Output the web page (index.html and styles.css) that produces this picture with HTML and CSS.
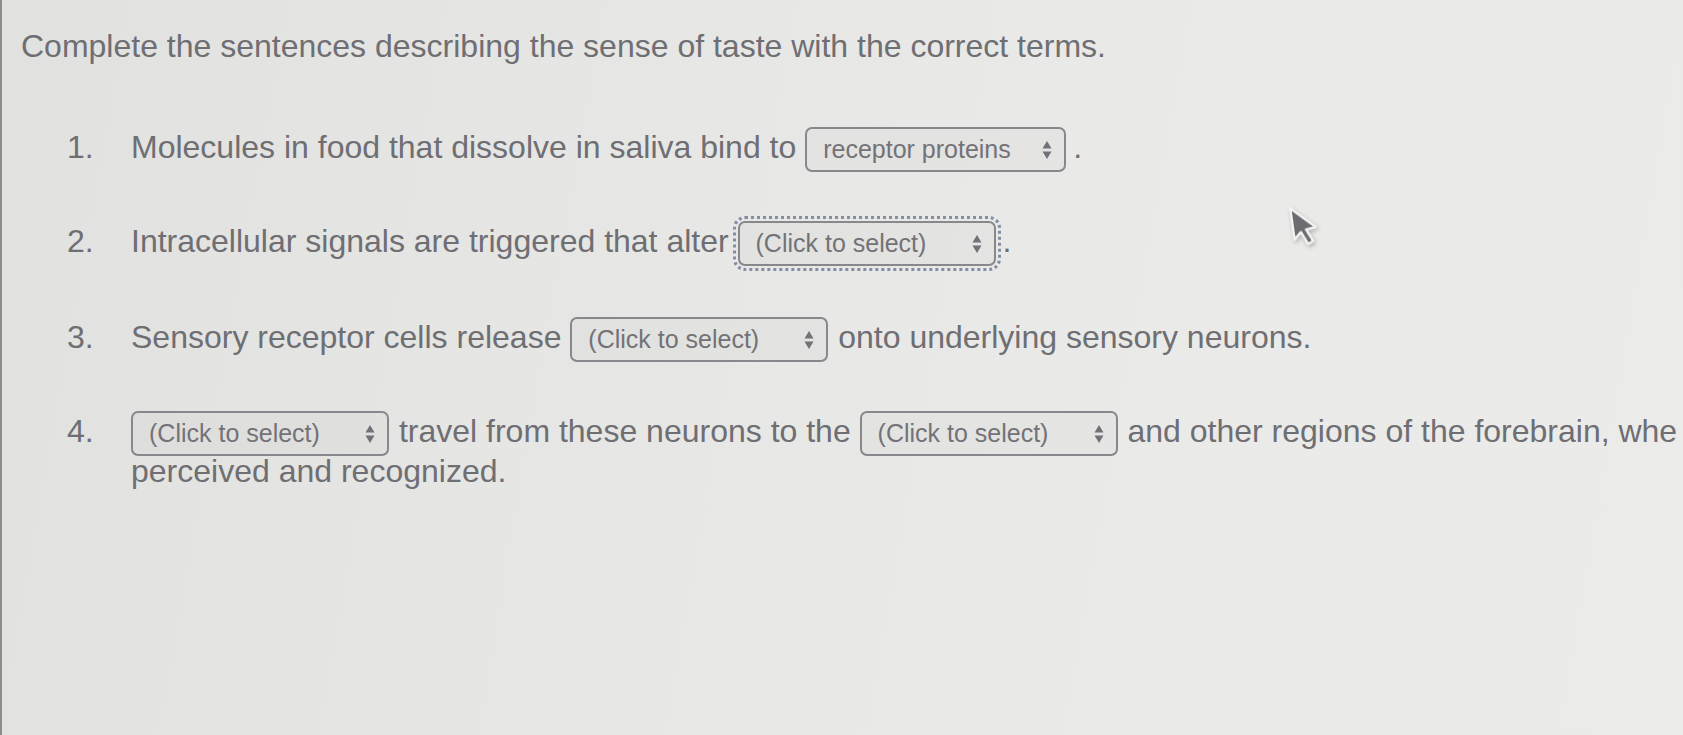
FILE: index.html
```html
<!DOCTYPE html>
<html lang="en">
<head>
<meta charset="utf-8">
<title>Sense of taste</title>
<link rel="stylesheet" href="styles.css">
</head>
<body>
<main class="page">
  <p class="prompt">Complete the sentences describing the sense of taste with the correct terms.</p>
  <ol class="items">
    <li class="item">
      <span class="num">1.</span>
      <span class="text">Molecules in food that dissolve in saliva bind to <span class="select"><span class="select-label">receptor proteins</span><svg class="select-arrows" viewBox="0 0 10 20"><path d="M0.5 8.5 L5 1 L9.5 8.5 Z M0.5 11.5 L5 19 L9.5 11.5 Z"/></svg></span><span class="end">.</span></span>
    </li>
    <li class="item">
      <span class="num">2.</span>
      <span class="text">Intracellular signals are triggered that alter <span class="select select-focus"><span class="select-label">(Click to select)</span><svg class="select-arrows" viewBox="0 0 10 20"><path d="M0.5 8.5 L5 1 L9.5 8.5 Z M0.5 11.5 L5 19 L9.5 11.5 Z"/></svg></span><span class="end">.</span></span>
    </li>
    <li class="item">
      <span class="num">3.</span>
      <span class="text">Sensory receptor cells release <span class="select"><span class="select-label">(Click to select)</span><svg class="select-arrows" viewBox="0 0 10 20"><path d="M0.5 8.5 L5 1 L9.5 8.5 Z M0.5 11.5 L5 19 L9.5 11.5 Z"/></svg></span> onto underlying sensory neurons.</span>
    </li>
    <li class="item">
      <span class="num">4.</span>
      <span class="text"><span class="nowrap"><span class="select"><span class="select-label">(Click to select)</span><svg class="select-arrows" viewBox="0 0 10 20"><path d="M0.5 8.5 L5 1 L9.5 8.5 Z M0.5 11.5 L5 19 L9.5 11.5 Z"/></svg></span> travel from these neurons to the <span class="select"><span class="select-label">(Click to select)</span><svg class="select-arrows" viewBox="0 0 10 20"><path d="M0.5 8.5 L5 1 L9.5 8.5 Z M0.5 11.5 L5 19 L9.5 11.5 Z"/></svg></span> and other regions of the forebrain, whe</span><br>perceived and recognized.</span>
    </li>
  </ol>
  <svg class="cursor" viewBox="0 0 24 36" width="24" height="36" aria-hidden="true">
    <path d="M2 2 L2 28 L8 22.5 L12.5 33 L17 31 L12.5 21 L20.5 20 Z"/>
  </svg>
</main>
</body>
</html>
```

FILE: styles.css
```css
html, body {
  margin: 0;
  height: 100%;
}

body {
  overflow: hidden;
  background: linear-gradient(100deg, #e1e1df 0%, #e6e6e4 35%, #eaeae8 70%, #ebebea 100%);
  border-left: 2px solid #8d8d8d;
  box-sizing: border-box;
  font-family: "Liberation Sans", Arial, sans-serif;
  color: #6e6e73;
}

.page {
  position: relative;
  padding: 27px 0 0 19px;
  height: 100%;
  box-sizing: border-box;
}

.prompt {
  margin: 0;
  font-size: 32px;
  line-height: 38px;
}

.items {
  list-style: none;
  margin: 63px 0 0 0;
  padding: 0 0 0 46px;
}

.item {
  display: flex;
  font-size: 32px;
  line-height: 38px;
  margin-bottom: 54px;
}

.item:nth-child(2) {
  margin-bottom: 56px;
}

.num {
  flex: none;
  width: 64px;
}

.text {
  flex: 1;
  white-space: nowrap;
}

.nowrap {
  white-space: nowrap;
}

.end {
  margin-left: 6px;
}

.select {
  display: inline-flex;
  align-items: center;
  justify-content: space-between;
  box-sizing: border-box;
  width: 258px;
  height: 45px;
  margin: -4px 1px -4px 0;
  padding: 0 12px 0 16px;
  border: 2px solid #88888c;
  border-radius: 7px;
  background: rgba(0, 0, 0, 0.02);
  font-size: 25px;
  line-height: 1;
  color: #727277;
  vertical-align: middle;
}

.item:nth-child(1) .select {
  width: 261px;
}

.select-focus {
  outline: 3px dotted #838da4;
  outline-offset: 2px;
}

.select-arrows {
  width: 10px;
  height: 20px;
  fill: #717177;
  flex: none;
}

.cursor {
  position: absolute;
  left: 1288px;
  top: 204px;
  width: 30px;
  height: 44px;
  fill: #6c6c70;
  stroke: #f4f4f4;
  stroke-width: 2;
  stroke-linejoin: round;
  filter: drop-shadow(1px 2px 2px rgba(0, 0, 0, 0.25));
  transform: rotate(-8deg);
}
```
